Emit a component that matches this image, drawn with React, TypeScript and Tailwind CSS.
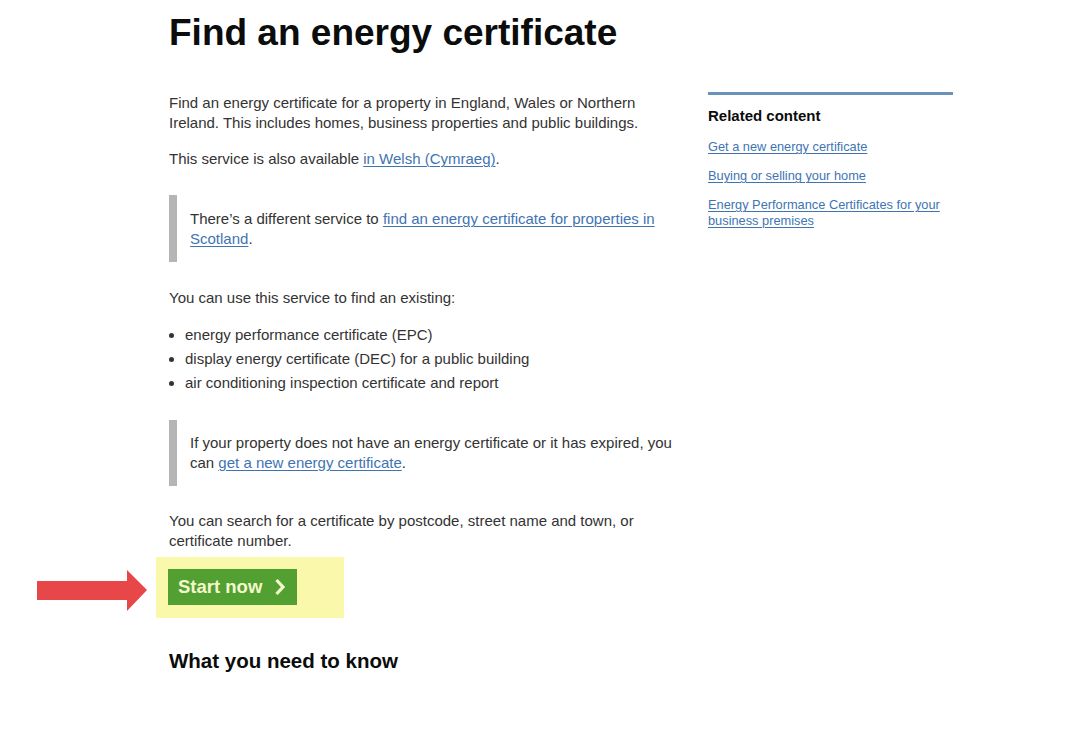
export default function App() {
  const link = "text-[#3f74b3] underline underline-offset-2 decoration-1";

  return (
    <div className="min-h-screen bg-white font-['Liberation_Sans',Arial,sans-serif] text-[#333]">
      <div className="flex pl-[169px]">
        {/* main column */}
        <main className="w-[510px] shrink-0 pt-[12px]">
          <h1 className="mb-[39px] text-[37px] font-bold leading-[42px] text-[#0b0c0c]">
            Find an energy certificate
          </h1>

          <p className="mb-[16px] text-[15px] leading-[20px]">
            Find an energy certificate for a property in England, Wales or Northern Ireland. This
            includes homes, business properties and public buildings.
          </p>
          <p className="text-[15px] leading-[20px]">
            This service is also available <a className={link}>in Welsh (Cymraeg)</a>.
          </p>

          <div className="mt-[26px] border-l-[8px] border-[#b5b5b5] pt-[14px] pb-[13px] pl-[13px] text-[15px] leading-[20px]">
            There’s a different service to{" "}
            <a className={link}>find an energy certificate for properties in Scotland</a>.
          </div>

          <p className="mt-[26px] text-[15px] leading-[20px]">
            You can use this service to find an existing:
          </p>
          <ul className="mt-[17px] list-disc pl-[16px] text-[15px] leading-[20px]">
            <li className="mb-[4px]">energy performance certificate (EPC)</li>
            <li className="mb-[4px]">display energy certificate (DEC) for a public building</li>
            <li>air conditioning inspection certificate and report</li>
          </ul>

          <div className="mt-[27px] border-l-[8px] border-[#b5b5b5] py-[13px] pl-[13px] text-[15px] leading-[20px]">
            If your property does not have an energy certificate or it has expired, you can{" "}
            <a className={link}>get a new energy certificate</a>.
          </div>

          <p className="mt-[25px] text-[15px] leading-[20px]">
            You can search for a certificate by postcode, street name and town, or certificate
            number.
          </p>

          {/* highlighted start button */}
          <div className="relative -ml-[13px] mt-[6px] w-[188px] bg-[#faf8ab] pt-[12px] pb-[13px] pl-[12px]">
            <svg
              className="absolute -left-[119px] top-[13px]"
              width="110"
              height="41"
              viewBox="0 0 110 41"
            >
              <polygon points="0,11 90,11 90,0 110,20 90,41 90,30 0,30" fill="#e8474a" />
            </svg>
            <button className="flex h-[36px] items-center gap-[12px] bg-[#52a031] pl-[10px] pr-[11px] text-[18.5px] font-bold text-[#f5f7cc]">
              Start now
              <svg width="12" height="18" viewBox="0 0 12 18">
                <polyline
                  points="2.5,2 9,9 2.5,16"
                  fill="none"
                  stroke="#f5f7cc"
                  strokeWidth="3.2"
                  strokeLinejoin="miter"
                />
              </svg>
            </button>
          </div>

          <h2 className="mt-[30px] text-[20.5px] font-bold leading-[25px] text-[#0b0c0c]">
            What you need to know
          </h2>
        </main>

        {/* related content */}
        <aside className="ml-[29px] mt-[92px] w-[245px] border-t-[3px] border-[#6a92bb] pt-[11px]">
          <h2 className="text-[15px] font-bold leading-[20px] text-[#0b0c0c]">Related content</h2>
          <ul className="mt-[13px] text-[12.8px] leading-[16px]">
            <li className="mb-[13px]">
              <a className={link}>Get a new energy certificate</a>
            </li>
            <li className="mb-[13px]">
              <a className={link}>Buying or selling your home</a>
            </li>
            <li className="pr-[10px]">
              <a className={link}>Energy Performance Certificates for your business premises</a>
            </li>
          </ul>
        </aside>
      </div>
    </div>
  );
}
